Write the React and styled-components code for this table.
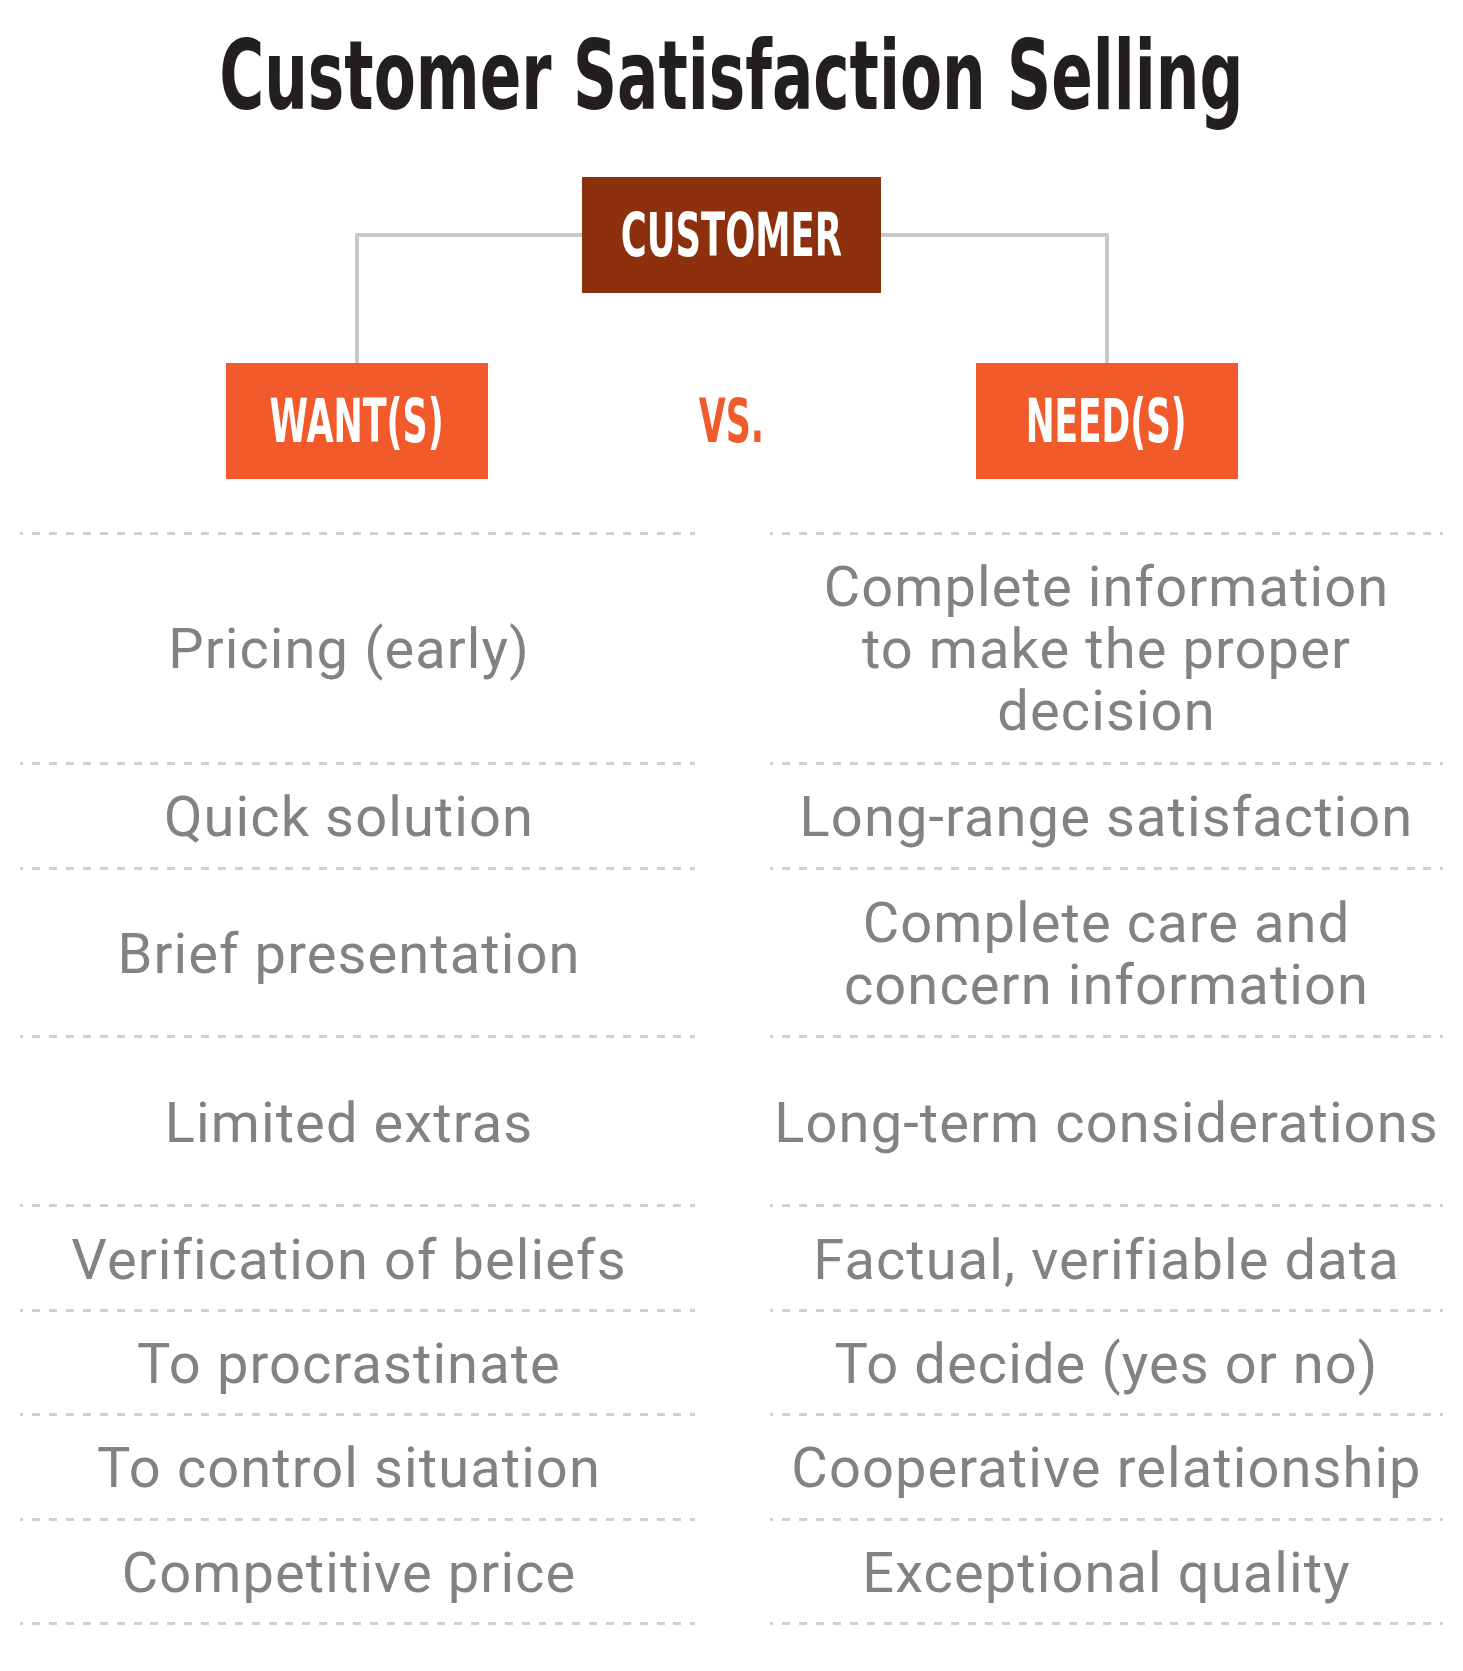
import React from 'react';
import styled, { createGlobalStyle } from 'styled-components';

const Global = createGlobalStyle`
  html, body { margin: 0; padding: 0; background: #ffffff; }
  * { box-sizing: border-box; }
`;

const DASH = '#cfd0d2';
const LINE = '#c9cacc';
const ORANGE = '#f15a2b';
const RUST = '#8c300e';
const GRAY = '#808285';
const CONDENSED = `"Liberation Sans Narrow", "DejaVu Sans Condensed", "Liberation Sans", sans-serif`;

const Page = styled.main`
  width: 1463px;
  min-height: 1671px;
  display: flex;
  flex-direction: column;
  align-items: center;
  background: #ffffff;
`;

const Title = styled.h1`
  margin: 0;
  width: 100%;
  height: 177px;
  padding-top: 28px;
  display: flex;
  justify-content: center;
  align-items: flex-start;
  font-family: ${CONDENSED};
  font-weight: 700;
  font-size: 96px;
  line-height: 96px;
  color: #231f20;
`;

const Squeeze = styled.span`
  display: inline-block;
  flex: none;
  white-space: nowrap;
  transform: scaleX(${(p) => p.$sx});
`;

const TopRow = styled.div`
  display: flex;
  width: 754px;
  height: 116px;
`;

const Arm = styled.div`
  flex: 1;
  margin-top: 56px;
  border-top: 4px solid ${LINE};
  border-${(p) => p.$side}: 4px solid ${LINE};
`;

const Stems = styled.div`
  width: 754px;
  height: 70px;
  border-left: 4px solid ${LINE};
  border-right: 4px solid ${LINE};
`;

const BoxRow = styled.div`
  display: flex;
  align-items: center;
  justify-content: space-between;
  width: 1012px;
  height: 116px;
`;

const Box = styled.div`
  display: flex;
  justify-content: center;
  width: ${(p) => p.$w}px;
  height: 116px;
  background: ${(p) => p.$bg};
  color: #ffffff;
  font-family: ${CONDENSED};
  font-weight: 700;
  font-size: 61px;
  line-height: 116px;
`;

const Versus = styled.div`
  display: flex;
  justify-content: center;
  width: 80px;
  height: 116px;
  color: ${ORANGE};
  font-family: ${CONDENSED};
  font-weight: 700;
  font-size: 61px;
  line-height: 116px;
`;

const Table = styled.section`
  display: grid;
  grid-template-columns: 675px 673px;
  column-gap: 75px;
  width: 1463px;
  padding: 0 20px;
  margin-top: 53px;
`;

const dash = `repeating-linear-gradient(90deg, ${DASH} 0 3.5px, transparent 3.5px 12.4px, ${DASH} 12.4px 16.87px)`;

const Cell = styled.div`
  display: flex;
  align-items: center;
  justify-content: center;
  height: ${(p) => p.$h}px;
  padding-right: ${(p) => (p.$left ? 17 : 0)}px;
  text-align: center;
  font-family: Roboto, "Liberation Sans", sans-serif;
  font-size: 56px;
  line-height: 62px;
  letter-spacing: 1.1px;
  color: ${GRAY};
  background-image: ${(p) => (p.$first ? `${dash}, ${dash}` : dash)};
  background-size: 100% 3px;
  background-repeat: no-repeat;
  background-position: ${(p) => (p.$first ? 'left top, left bottom' : 'left bottom')};
`;

const rows = [
  { h: 233.2, want: ['Pricing (early)'], need: ['Complete information', 'to make the proper', 'decision'] },
  { h: 104.4, want: ['Quick solution'], need: ['Long-range satisfaction'] },
  { h: 168.3, want: ['Brief presentation'], need: ['Complete care and', 'concern information'] },
  { h: 169.4, want: ['Limited extras'], need: ['Long-term considerations'] },
  { h: 104.5, want: ['Verification of beliefs'], need: ['Factual, verifiable data'] },
  { h: 104.4, want: ['To procrastinate'], need: ['To decide (yes or no)'] },
  { h: 104.4, want: ['To control situation'], need: ['Cooperative relationship'] },
  { h: 104.4, want: ['Competitive price'], need: ['Exceptional quality'] },
];

const Lines = ({ lines }) => (
  <span>
    {lines.map((l, i) => (
      <React.Fragment key={i}>
        {i > 0 && <br />}
        {l}
      </React.Fragment>
    ))}
  </span>
);

export default function App() {
  return (
    <Page>
      <Global />
      <Title>
        <Squeeze $sx={0.71}>Customer Satisfaction Selling</Squeeze>
      </Title>
      <TopRow>
        <Arm $side="left" />
        <Box $w={299} $bg={RUST}>
          <Squeeze $sx={0.645}>CUSTOMER</Squeeze>
        </Box>
        <Arm $side="right" />
      </TopRow>
      <Stems />
      <BoxRow>
        <Box $w={262} $bg={ORANGE}>
          <Squeeze $sx={0.637}>WANT(S)</Squeeze>
        </Box>
        <Versus>
          <Squeeze $sx={0.635}>VS.</Squeeze>
        </Versus>
        <Box $w={262} $bg={ORANGE}>
          <Squeeze $sx={0.628}>NEED(S)</Squeeze>
        </Box>
      </BoxRow>
      <Table>
        {rows.map((r, i) => (
          <React.Fragment key={i}>
            <Cell $h={r.h} $first={i === 0} $left>
              <Lines lines={r.want} />
            </Cell>
            <Cell $h={r.h} $first={i === 0}>
              <Lines lines={r.need} />
            </Cell>
          </React.Fragment>
        ))}
      </Table>
    </Page>
  );
}
